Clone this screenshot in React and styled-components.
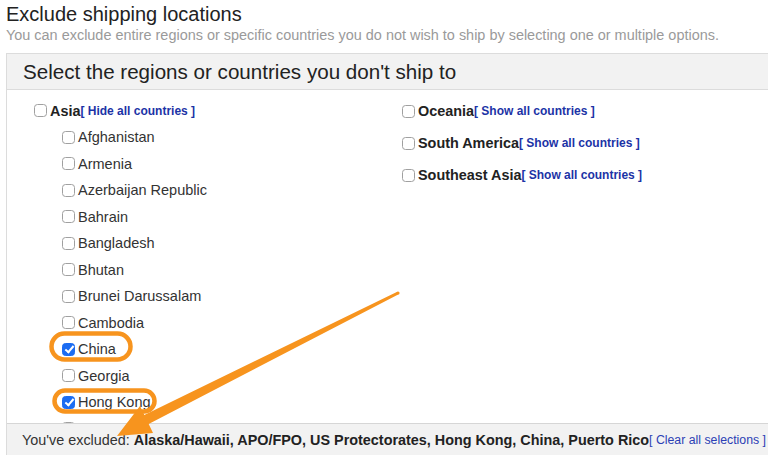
import React from "react";
import styled, { createGlobalStyle } from "styled-components";

const GlobalStyle = createGlobalStyle`
  html, body {
    margin: 0;
    padding: 0;
    background: #fff;
    overflow: hidden;
  }
  body {
    font-family: "Liberation Sans", Arial, sans-serif;
    color: #333;
  }
`;

const asiaCountries = [
  "Afghanistan",
  "Armenia",
  "Azerbaijan Republic",
  "Bahrain",
  "Bangladesh",
  "Bhutan",
  "Brunei Darussalam",
  "Cambodia",
  "China",
  "Georgia",
  "Hong Kong",
  "India",
  "Indonesia",
];

const checked = ["China", "Hong Kong"];

const otherRegions = ["Oceania", "South America", "Southeast Asia"];

function App() {
  return (
    <Page>
      <GlobalStyle />
      <Title>Exclude shipping locations</Title>
      <Subtitle>
        You can exclude entire regions or specific countries you do not wish
        to ship by selecting one or multiple options.
      </Subtitle>
      <Panel>
        <PanelHeader>Select the regions or countries you don't ship to</PanelHeader>
        <ListArea>
          <Column>
            <RegionRow>
              <Check type="checkbox" readOnly />
              <RegionName>Asia</RegionName>
              <ToggleLink>[ Hide all countries ]</ToggleLink>
            </RegionRow>
            {asiaCountries.map((name) => (
              <CountryRow key={name}>
                <Check
                  type="checkbox"
                  readOnly
                  checked={checked.includes(name)}
                />
                <span>{name}</span>
              </CountryRow>
            ))}
          </Column>
          <Column $wide>
            {otherRegions.map((name) => (
              <RegionRow key={name} $tall>
                <Check type="checkbox" readOnly />
                <RegionName>{name}</RegionName>
                <ToggleLink>[ Show all countries ]</ToggleLink>
              </RegionRow>
            ))}
          </Column>
        </ListArea>
        <Footer>
          You've excluded:&nbsp;
          <Excluded>
            Alaska/Hawaii, APO/FPO, US Protectorates, Hong Kong, China, Puerto
            Rico
          </Excluded>
          <ClearLink>[ Clear all selections ]</ClearLink>
        </Footer>
      </Panel>
      <Annotation viewBox="0 0 768 455">
        <rect x="51.5" y="333.5" width="79" height="26" rx="13" />
        <rect x="54.5" y="390.5" width="100" height="21" rx="10.5" />
        <polygon
          className="arrow"
          points="397.3,291.7 398.7,294.3 148.7,424 153,433 117,436 140,406 144.3,415"
        />
        <circle className="arrow" cx="398" cy="293" r="1.6" />
      </Annotation>
    </Page>
  );
}

export default App;

const Page = styled.div`
  position: relative;
  width: 768px;
  height: 455px;
  padding-left: 6px;
  box-sizing: border-box;
  overflow: hidden;
`;

const Title = styled.h1`
  margin: 0;
  padding-top: 2px;
  font-size: 20px;
  line-height: 24px;
  font-weight: normal;
  color: #222;
`;

const Subtitle = styled.p`
  margin: 0;
  font-size: 14.45px;
  line-height: 18px;
  color: #9a9a9a;
  white-space: nowrap;
`;

const Panel = styled.div`
  margin-top: 9px;
  width: 800px;
  border: 1px solid #dcdcdc;
  border-right: none;
  display: flex;
  flex-direction: column;
`;

const PanelHeader = styled.div`
  height: 35px;
  display: flex;
  align-items: center;
  padding-left: 16px;
  background: #f2f2f2;
  border-bottom: 1px solid #dcdcdc;
  font-size: 20.6px;
  color: #222;
`;

const ListArea = styled.div`
  height: 333px;
  overflow: hidden;
  display: grid;
  grid-template-columns: 368px 1fr;
  padding-left: 27px;
`;

const Column = styled.div`
  display: flex;
  flex-direction: column;
  padding-top: ${(p) => (p.$wide ? "5px" : "7.5px")};
`;

const RegionRow = styled.div`
  height: ${(p) => (p.$tall ? "32px" : "26.5px")};
  display: flex;
  align-items: center;
  font-size: 14.4px;
  white-space: nowrap;
`;

const CountryRow = styled.div`
  height: 26.5px;
  display: flex;
  align-items: center;
  margin-left: 28px;
  font-size: 14.5px;
  color: #333;
  white-space: nowrap;
`;

const Check = styled.input`
  appearance: none;
  margin: 0 3px 0 0;
  width: 13px;
  height: 13px;
  border: 1px solid #a0a0a0;
  border-radius: 3.5px;
  background: #fff;
  box-sizing: border-box;
  position: relative;
  flex-shrink: 0;

  &:checked {
    background: #1b6cf2;
    border-color: #1b6cf2;
  }
  &:checked::after {
    content: "";
    position: absolute;
    left: 3.5px;
    top: 0.5px;
    width: 3px;
    height: 7px;
    border: solid #fff;
    border-width: 0 2px 2px 0;
    transform: rotate(40deg);
  }
`;

const RegionName = styled.span`
  font-weight: bold;
  color: #222;
`;

const ToggleLink = styled.span`
  font-size: 12px;
  font-weight: bold;
  color: #1c33a6;
`;

const Footer = styled.div`
  height: 31px;
  display: flex;
  align-items: center;
  padding-left: 15px;
  background: #f2f2f2;
  border-top: 1px solid #d6d6d6;
  font-size: 14.4px;
  color: #333;
  white-space: nowrap;
`;

const Excluded = styled.span`
  font-weight: bold;
  color: #222;
`;

const ClearLink = styled.span`
  font-size: 12.3px;
  color: #2c3fb5;
`;

const Annotation = styled.svg`
  position: absolute;
  left: 0;
  top: 0;
  width: 768px;
  height: 455px;
  pointer-events: none;

  rect {
    fill: none;
    stroke: #f7941e;
    stroke-width: 4.5;
  }
  .arrow {
    fill: #f7941e;
  }
`;
